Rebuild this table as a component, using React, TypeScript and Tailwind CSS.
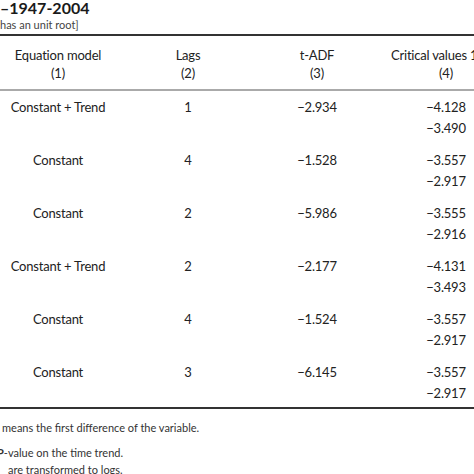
const rows = [
  { model: 'Constant + Trend', lags: '1', adf: '−2.934', crit: ['−4.128', '−3.490'] },
  { model: 'Constant', lags: '4', adf: '−1.528', crit: ['−3.557', '−2.917'] },
  { model: 'Constant', lags: '2', adf: '−5.986', crit: ['−3.555', '−2.916'] },
  { model: 'Constant + Trend', lags: '2', adf: '−2.177', crit: ['−4.131', '−3.493'] },
  { model: 'Constant', lags: '4', adf: '−1.524', crit: ['−3.557', '−2.917'] },
  { model: 'Constant', lags: '3', adf: '−6.145', crit: ['−3.557', '−2.917'] },
]

const cols = 'grid grid-cols-[116px_144px_114px_144px] w-[518px]'

export default function App() {
  return (
    <div
      className="w-[474px] h-[474px] overflow-hidden bg-white text-[#222]"
      style={{ fontFamily: 'Lato, "Open Sans", sans-serif' }}
    >
      {/* Caption */}
      <div className="h-[34px]">
        <p className="text-[16px] font-bold leading-[16px] text-[#1a1a1a]">–1947-2004</p>
        <p className="text-[11px] leading-[14px] mt-[2px] text-[#444]">has an unit root]</p>
      </div>

      <div className="w-[518px] border-t-2 border-[#333]">
        {/* Header */}
        <div className={`${cols} pt-[10px] pb-[7px] text-[13px] leading-[18px] tracking-[-0.2px] text-center`}>
          <div>
            <div>Equation model</div>
            <div>(1)</div>
          </div>
          <div>
            <div>Lags</div>
            <div>(2)</div>
          </div>
          <div>
            <div>t-ADF</div>
            <div>(3)</div>
          </div>
          <div>
            <div className="whitespace-nowrap text-left pl-[17px]">Critical values 1% and 5%</div>
            <div>(4)</div>
          </div>
        </div>

        {/* Body */}
        <div className="border-t-2 border-[#aaa] pt-[6px] pb-[3px] flex flex-col gap-[11px] text-[13px] leading-[21px] tracking-[-0.2px]">
          {rows.map((r, i) => (
            <div key={i} className={`${cols} text-center`}>
              <div>{r.model}</div>
              <div>{r.lags}</div>
              <div>{r.adf}</div>
              <div>
                <div>{r.crit[0]}</div>
                <div>{r.crit[1]}</div>
              </div>
            </div>
          ))}
        </div>
      </div>

      {/* Footnotes */}
      <div className="w-[518px] border-t-2 border-[#333] text-[11px] text-[#333]">
        <p className="leading-[13px] mt-[12px] whitespace-nowrap">
          <span className="-ml-[5px] mr-[4px]">ᵃ</span>means the first difference of the variable.
        </p>
        <p className="leading-[13px] mt-[12px] whitespace-nowrap">
          <span className="-ml-[3px] font-bold">P</span>-value on the time trend.
        </p>
        <p className="leading-[13px] mt-[4px] whitespace-nowrap pl-[8px]">are transformed to logs.</p>
      </div>
    </div>
  )
}
